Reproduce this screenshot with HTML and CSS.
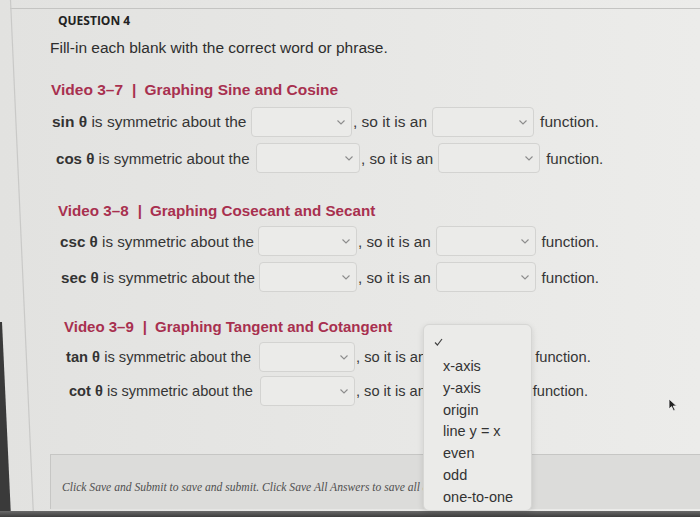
FILE: index.html
```html
<!DOCTYPE html>
<html lang="en">
<head>
<meta charset="utf-8">
<title>Question 4</title>
<link rel="stylesheet" href="styles.css">
</head>
<body>
<svg class="frame" width="700" height="517" viewBox="0 0 700 517" aria-hidden="true">
  <line x1="10" y1="8.5" x2="700" y2="8.5" stroke="#c4c4c2" stroke-width="1"/>
  <line x1="10.5" y1="0" x2="33.5" y2="517" stroke="#c9c9c7" stroke-width="1.2"/>
  <polygon points="0,322 2,322 11,517 0,517" fill="#3a3a3a"/>
</svg>

<main class="page">
  <div class="qlabel">QUESTION 4</div>
  <p class="prompt">Fill-in each blank with the correct word or phrase.</p>

  <section class="sec sec-a">
    <h2 class="sec-title t1">Video 3–7<span class="pipe">|</span>Graphing Sine and Cosine</h2>
    <div class="row r1">
      <span class="lbl"><b>sin θ</b> is symmetric about the</span>
      <span class="sel s1"><svg class="chev" width="8" height="5" viewBox="0 0 8 5"><polyline points="0.5,0.5 4,4 7.5,0.5"/></svg></span>
      <span class="mid">, so it is an</span>
      <span class="sel s2"><svg class="chev" width="8" height="5" viewBox="0 0 8 5"><polyline points="0.5,0.5 4,4 7.5,0.5"/></svg></span>
      <span class="fn">function.</span>
    </div>
    <div class="row r2">
      <span class="lbl"><b>cos θ</b> is symmetric about the</span>
      <span class="sel s1"><svg class="chev" width="8" height="5" viewBox="0 0 8 5"><polyline points="0.5,0.5 4,4 7.5,0.5"/></svg></span>
      <span class="mid">, so it is an</span>
      <span class="sel s2"><svg class="chev" width="8" height="5" viewBox="0 0 8 5"><polyline points="0.5,0.5 4,4 7.5,0.5"/></svg></span>
      <span class="fn">function.</span>
    </div>
  </section>

  <section class="sec sec-b">
    <h2 class="sec-title t2">Video 3–8<span class="pipe">|</span>Graphing Cosecant and Secant</h2>
    <div class="row r3">
      <span class="lbl"><b>csc θ</b> is symmetric about the</span>
      <span class="sel s1"><svg class="chev" width="8" height="5" viewBox="0 0 8 5"><polyline points="0.5,0.5 4,4 7.5,0.5"/></svg></span>
      <span class="mid">, so it is an</span>
      <span class="sel s2"><svg class="chev" width="8" height="5" viewBox="0 0 8 5"><polyline points="0.5,0.5 4,4 7.5,0.5"/></svg></span>
      <span class="fn">function.</span>
    </div>
    <div class="row r4">
      <span class="lbl"><b>sec θ</b> is symmetric about the</span>
      <span class="sel s1"><svg class="chev" width="8" height="5" viewBox="0 0 8 5"><polyline points="0.5,0.5 4,4 7.5,0.5"/></svg></span>
      <span class="mid">, so it is an</span>
      <span class="sel s2"><svg class="chev" width="8" height="5" viewBox="0 0 8 5"><polyline points="0.5,0.5 4,4 7.5,0.5"/></svg></span>
      <span class="fn">function.</span>
    </div>
  </section>

  <section class="sec sec-c">
    <h2 class="sec-title t3">Video 3–9<span class="pipe">|</span>Graphing Tangent and Cotangent</h2>
    <div class="row r5">
      <span class="lbl"><b>tan θ</b> is symmetric about the</span>
      <span class="sel s1"><svg class="chev" width="8" height="5" viewBox="0 0 8 5"><polyline points="0.5,0.5 4,4 7.5,0.5"/></svg></span>
      <span class="mid">, so it is an</span>
      <span class="sel s2"><svg class="chev" width="8" height="5" viewBox="0 0 8 5"><polyline points="0.5,0.5 4,4 7.5,0.5"/></svg></span>
      <span class="fn">function.</span>
    </div>
    <div class="row r6">
      <span class="lbl"><b>cot θ</b> is symmetric about the</span>
      <span class="sel s1"><svg class="chev" width="8" height="5" viewBox="0 0 8 5"><polyline points="0.5,0.5 4,4 7.5,0.5"/></svg></span>
      <span class="mid">, so it is an</span>
      <span class="sel s2"><svg class="chev" width="8" height="5" viewBox="0 0 8 5"><polyline points="0.5,0.5 4,4 7.5,0.5"/></svg></span>
      <span class="fn">function.</span>
    </div>
  </section>

  <footer class="footer">
    <p class="footer-text">Click Save and Submit to save and submit. Click Save All Answers to save all answers.</p>
  </footer>
</main>

<div class="menu" role="listbox">
  <div class="opt opt-blank"><svg class="check" width="9" height="8" viewBox="0 0 9 8"><polyline points="1,4.5 3.4,7 8,1"/></svg></div>
  <div class="opt">x-axis</div>
  <div class="opt">y-axis</div>
  <div class="opt">origin</div>
  <div class="opt">line y = x</div>
  <div class="opt">even</div>
  <div class="opt">odd</div>
  <div class="opt">one-to-one</div>
</div>

<svg class="cursor" width="10" height="14" viewBox="0 0 10 14" aria-hidden="true">
  <path d="M1 1 L1 11 L3.5 8.6 L5.6 13 L7.2 12.2 L5.2 8 L8.6 8 Z" fill="#222" stroke="#f2f2f2" stroke-width="0.8"/>
</svg>
<div class="bezel"></div>
</body>
</html>
```

FILE: styles.css
```css
html, body {
  margin: 0;
  padding: 0;
}

body {
  width: 700px;
  height: 517px;
  overflow: hidden;
  position: relative;
  background: linear-gradient(to right, #e2e2e0 0%, #e7e7e5 50%, #ececea 100%);
  font-family: "Liberation Sans", Arial, Helvetica, sans-serif;
  color: #353535;
}

.frame {
  position: absolute;
  left: 0;
  top: 0;
  z-index: 0;
}

.page {
  position: relative;
  z-index: 1;
  padding-top: 12px;
  display: flex;
  flex-direction: column;
}

.qlabel {
  font-family: "Open Sans", "Liberation Sans", sans-serif;
  font-weight: 700;
  font-size: 12px;
  line-height: 18px;
  color: #222;
  padding-left: 58px;
}

.prompt {
  margin: 8px 0 0;
  font-size: 15.5px;
  line-height: 20px;
  padding-left: 50px;
  color: #2e2e2e;
}

.sec {
  display: flex;
  flex-direction: column;
  gap: 6px;
}

.sec-a {
  margin-top: 22px;
}

.sec-a .sec-title {
  margin-bottom: 1px;
}

.sec-b {
  margin-top: 28px;
}

.sec-b .sec-title {
  margin-bottom: -1px;
  font-size: 15.2px;
}

.sec-c {
  margin-top: 25px;
  gap: 5px;
}

.sec-c .sec-title {
  margin-bottom: 0;
  font-size: 15px;
}

.sec-title {
  margin: 0;
  font-size: 15.5px;
  line-height: 20px;
  font-weight: 700;
  color: #a8304f;
}

.pipe {
  display: inline-block;
  margin: 0 8px 0 9px;
}

.t1 { padding-left: 51px; }
.t2 { padding-left: 58px; }
.t3 { padding-left: 64px; }

.row {
  --lw: 194px;
  --w1: 101px;
  --w2: 102px;
  display: flex;
  align-items: center;
  height: 30px;
  font-size: 15.5px;
}

.r1 { padding-left: 52px; --lw: 194px; --w1: 101px; --w2: 102px; font-size: 15.5px; }
.r2 { padding-left: 56px; --lw: 195px; --w1: 104px; --w2: 102px; font-size: 15.1px; }
.r3 { padding-left: 60px; --lw: 193px; --w1: 99px;  --w2: 100px; font-size: 15.2px; }
.r4 { padding-left: 61px; --lw: 193px; --w1: 98px;  --w2: 100px; font-size: 15.2px; }
.r5 { padding-left: 66px; --lw: 188px; --w1: 96px;  --w2: 98px;  font-size: 14.7px; }
.r6 { padding-left: 69px; --lw: 186px; --w1: 95px;  --w2: 96px;  font-size: 14.6px; margin-top: -1px; }

.lbl {
  width: var(--lw);
  white-space: nowrap;
  flex: none;
}

.lbl b {
  font-weight: 700;
  color: #333;
}

.sel {
  box-sizing: border-box;
  height: 30px;
  border: 1px solid #d3d3d1;
  border-radius: 4px;
  background: #ebebe9;
  display: flex;
  align-items: center;
  justify-content: flex-end;
  padding-right: 6px;
  flex: none;
}

.s1 {
  width: var(--w1);
  margin-left: 5px;
}

.s2 {
  width: var(--w2);
  margin-left: 5px;
}

.chev {
  display: block;
  fill: none;
  stroke: #8c8c8c;
  stroke-width: 1.1;
}

.mid {
  margin-left: 1px;
  white-space: nowrap;
}

.fn {
  margin-left: 6px;
  white-space: nowrap;
}

.footer {
  margin: 48px 0 0 50px;
  height: 55px;
  box-sizing: border-box;
  background: #dcdcda;
  border-top: 1px solid #c6c6c4;
  border-left: 1px solid #c6c6c4;
  display: flex;
  align-items: center;
}

.footer-text {
  margin: 11px 0 0 11px;
  font-family: "Liberation Serif", "Times New Roman", serif;
  font-style: italic;
  font-size: 11.6px;
  color: #505050;
  white-space: nowrap;
}

.menu {
  position: absolute;
  z-index: 3;
  left: 423px;
  top: 324px;
  width: 109px;
  height: 187px;
  box-sizing: border-box;
  padding: 5px 0 0 19px;
  background: #ebebe9;
  border: 1px solid #d6d6d4;
  border-radius: 6px;
  box-shadow: 0 2px 6px rgba(0, 0, 0, 0.12);
  font-family: "Liberation Sans", Arial, sans-serif;
  font-size: 14.5px;
  color: #333;
}

.opt {
  height: 21.8px;
  line-height: 21.8px;
  white-space: nowrap;
}

.opt-blank {
  height: 26px;
  position: relative;
}

.check {
  position: absolute;
  left: -9px;
  top: 8px;
  fill: none;
  stroke: #444;
  stroke-width: 1.2;
}

.cursor {
  position: absolute;
  z-index: 4;
  left: 668px;
  top: 398px;
}

.bezel {
  position: absolute;
  z-index: 2;
  left: 0;
  right: 0;
  bottom: 0;
  height: 6px;
  background: linear-gradient(to bottom, #6a6a6a, #3c3c3c);
}
```
